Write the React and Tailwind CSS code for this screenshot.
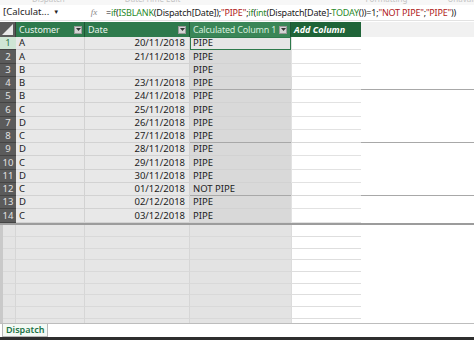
import React from "react";

const rows = [
  ["A", "20/11/2018", "PIPE"],
  ["A", "21/11/2018", "PIPE"],
  ["B", "", "PIPE"],
  ["B", "23/11/2018", "PIPE"],
  ["B", "24/11/2018", "PIPE"],
  ["C", "25/11/2018", "PIPE"],
  ["D", "26/11/2018", "PIPE"],
  ["C", "27/11/2018", "PIPE"],
  ["D", "28/11/2018", "PIPE"],
  ["C", "29/11/2018", "PIPE"],
  ["D", "30/11/2018", "PIPE"],
  ["C", "01/12/2018", "NOT PIPE"],
  ["D", "02/12/2018", "PIPE"],
  ["C", "03/12/2018", "PIPE"],
];

function Drop() {
  return (
    <div className="w-[8px] h-[8px] shrink-0 bg-[#d4d4d4] border border-[#9a9a9a] flex items-center justify-center">
      <svg width="5" height="3" viewBox="0 0 5 3"><path d="M0 0H5L2.5 3Z" fill="#333" /></svg>
    </div>
  );
}

const G = ({ children }) => <span className="text-[#2a8a2a]">{children}</span>;
const R = ({ children }) => <span className="text-[#b02020]">{children}</span>;

export default function App() {
  return (
    <div className="w-[474px] h-[340px] overflow-hidden bg-white flex flex-col" style={{ fontFamily: '"Noto Sans", "Open Sans", sans-serif' }}>
      {/* faded ribbon bottom */}
      <div className="h-[5px] overflow-hidden relative bg-[#f7f7f7]">
        <div className="absolute -top-[6px] left-0 w-full flex text-[8px] text-[#c4c4c4] leading-[10px] whitespace-nowrap">
          <span className="ml-[32px]">Dispatch</span>
          <span className="ml-[60px]">Date/Time Edit</span>
          <span className="ml-[185px]">Formatting</span>
          <span className="ml-[40px]">Unavailable</span>
        </div>
      </div>
      {/* formula bar */}
      <div className="h-[16px] flex items-center border-b border-[#e2e2e2] bg-white">
        <div className="w-[82px] h-full flex items-center pl-[3px] text-[9.5px] text-[#222] whitespace-nowrap">
          <span>[Calculat...</span>
          <span className="ml-[4px] text-[6px]">▼</span>
        </div>
        <div className="w-[24px] flex justify-center text-[9px] italic text-[#888]" style={{ fontFamily: '"Liberation Serif", serif' }}>fx</div>
        <div className="text-[9px] text-[#222] whitespace-nowrap tracking-[-0.2px]">
          =<G>if</G>(<G>ISBLANK</G>(Dispatch[Date]);<R>"PIPE"</R>;<G>if</G>(<G>int</G>(Dispatch[Date]-<G>TODAY</G>())=1;<R>"NOT PIPE"</R>;<R>"PIPE"</R>))
        </div>
      </div>
      {/* header row */}
      <div className="h-[15px] flex mt-[1px] bg-[#f1f1f1]">
        <div className="w-[16px] bg-[#5b5b5b] flex items-end justify-end p-[2px] border-r border-[#3c3c3c]">
          <svg width="11" height="11" viewBox="0 0 11 11"><path d="M11 0V11H0Z" fill="#e8e8e8" /></svg>
        </div>
        <div className="w-[69px] bg-[#2e7a4c] border-r border-[#1d5534] flex items-center justify-between pl-[3px] pr-[2px] text-[9px] tracking-[-0.1px] text-[#e9f3ec] whitespace-nowrap">
          <span>Customer</span><Drop />
        </div>
        <div className="w-[105px] bg-[#2e7a4c] border-r border-[#1d5534] flex items-center justify-between pl-[3px] pr-[3px] text-[9px] text-[#e9f3ec] whitespace-nowrap">
          <span>Date</span><Drop />
        </div>
        <div className="w-[101px] bg-[#3a8657] border-r border-[#1d5534] flex items-center justify-between pl-[3px] pr-[3px] text-[9px] tracking-[-0.2px] text-[#d6eedd] whitespace-nowrap">
          <span>Calculated Column 1</span><Drop />
        </div>
        <div className="w-[70px] bg-[#1f6438] flex items-center pl-[3px] text-[9px] font-bold italic text-white whitespace-nowrap">
          Add Column
        </div>
      </div>
      {/* data rows */}
      <div className="flex flex-col">
        {rows.map((r, i) => {
          const sel = i === 0;
          const group = (i + 1) % 4 === 0 && i !== 13;
          const bb = group ? "border-b border-[#a8a8a8]" : "border-b border-[#d2d2d2]";
          return (
            <div key={i} className="h-[13.25px] flex text-[9.5px] text-[#222] leading-none">
              <div className={`w-[16px] flex items-center justify-center ${sel ? "bg-[#cfe6d5] text-[#2e7a4c]" : "bg-[#5b5b5b] text-[#e2e2e2]"} border-b border-[#444]`}>{i + 1}</div>
              <div className={`w-[69px] bg-[#e8e8e8] border-r border-[#d2d2d2] ${bb} flex items-center pl-[3px]`}>{r[0]}</div>
              <div className={`w-[105px] bg-[#e8e8e8] border-r border-[#d2d2d2] ${bb} flex items-center justify-end pr-[4px]`}>{r[1]}</div>
              <div className={`w-[101px] bg-[#d9d9d9] ${bb} flex items-center pl-[3px] ${sel ? "outline outline-[1.5px] -outline-offset-1 outline-[#2e7a4c] bg-[#e6e6e6]" : ""}`}>{r[2]}</div>
              <div className={`w-[70px] bg-white border-l border-[#d8d8d8] ${group ? "border-b border-[#a8a8a8]" : "border-b border-[#e2e2e2]"}`}></div>
              <div className={`flex-1 bg-white ${group ? "border-b border-[#a8a8a8]" : ""}`}></div>
            </div>
          );
        })}
      </div>
      <div className="h-[2px] bg-[#9c9c9c] shrink-0"></div>
      {/* empty area */}
      <div className="flex-1 overflow-hidden flex flex-col">
        {Array.from({ length: 9 }).map((_, i) => (
          <div key={i} className={`${i === 0 ? "h-[12.5px]" : "h-[11.7px]"} shrink-0 flex`}>
            <div className="w-[3px] bg-[#c9c9c9]"></div>
            <div className="w-[13px] bg-[#e4e4e4] border-r border-[#d6d6d6] border-b border-b-[#d9d9d9]"></div>
            <div className="w-[69px] bg-[#e6e6e6] border-r border-[#d6d6d6] border-b border-b-[#d9d9d9]"></div>
            <div className="w-[105px] bg-[#e6e6e6] border-r border-[#d6d6d6] border-b border-b-[#d9d9d9]"></div>
            <div className="w-[101px] bg-[#e3e3e3] border-b border-[#d9d9d9]"></div>
            <div className="w-[70px] bg-white border-l border-[#dcdcdc] border-b border-b-[#dedede]"></div>
            <div className="flex-1 bg-white"></div>
          </div>
        ))}
      </div>
      {/* sheet tabs */}
      <div className="h-[14px] shrink-0 border-t border-[#bdbdbd] bg-white flex items-start">
        <div className="ml-[2px] h-[13px] px-[3px] bg-[#f4faf5] border border-t-0 border-[#b8b8b8] text-[9px] font-semibold text-[#217346] flex items-center">Dispatch</div>
      </div>
      <div className="h-[3px] shrink-0 bg-[#2e2e2e]"></div>
    </div>
  );
}
